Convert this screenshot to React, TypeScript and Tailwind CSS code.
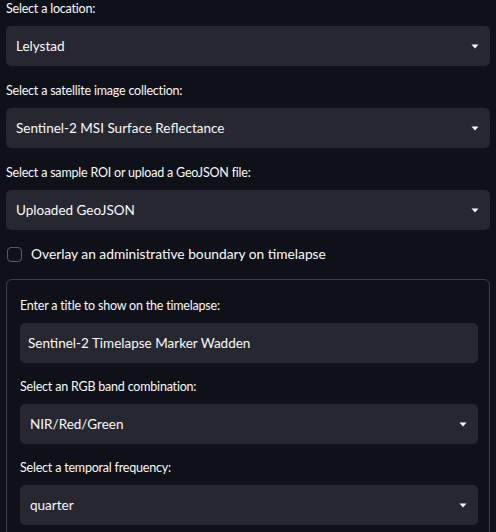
import React from 'react';

const Caret: React.FC = () => (
  <svg width="8" height="5" viewBox="0 0 8 5" className="shrink-0">
    <path d="M0.5 0.5h7L4 4.5z" fill="#fafafa" />
  </svg>
);

interface FieldProps {
  label: string;
  value: string;
}

const FieldLabel: React.FC<{ text: string }> = ({ text }) => (
  <div className="h-[26px] text-[12.5px] leading-[18px] tracking-[-0.2px] text-[#fafafa]">{text}</div>
);

const SelectField: React.FC<FieldProps> = ({ label, value }) => (
  <div className="flex flex-col">
    <FieldLabel text={label} />
    <div className="h-10 rounded-[5px] bg-[#262730] flex items-center justify-between pl-[10px] pr-[11px]">
      <span className="text-[13.5px] text-[#fafafa]">{value}</span>
      <Caret />
    </div>
  </div>
);

const TextField: React.FC<FieldProps> = ({ label, value }) => (
  <div className="flex flex-col">
    <FieldLabel text={label} />
    <div className="h-10 rounded-[5px] bg-[#262730] flex items-center pl-[8px]">
      <span className="text-[13.5px] text-[#fafafa]">{value}</span>
    </div>
  </div>
);

export default function App() {
  return (
    <div
      className="w-[496px] h-[532px] overflow-hidden bg-[#0e1117] px-[6px] flex flex-col"
      style={{ fontFamily: 'Lato, "Noto Sans", sans-serif' }}
    >
      <div className="flex flex-col gap-4">
        <SelectField label="Select a location:" value="Lelystad" />
        <SelectField label="Select a satellite image collection:" value="Sentinel-2 MSI Surface Reflectance" />
        <SelectField label="Select a sample ROI or upload a GeoJSON file:" value="Uploaded GeoJSON" />
      </div>

      <div className="mt-4 flex items-center h-4 pl-px">
        <div className="w-[15px] h-[15px] rounded-[4px] border border-[#5a5c64]" />
        <span className="ml-[9px] text-[13.75px] text-[#fafafa]">Overlay an administrative boundary on timelapse</span>
      </div>

      <div className="mt-[17px] rounded-[6px] border border-[#3d3f46] pt-[17px] pl-[13px] pr-[11px] pb-4 flex flex-col gap-[15px]">
        <TextField label="Enter a title to show on the timelapse:" value="Sentinel-2 Timelapse Marker Wadden" />
        <SelectField label="Select an RGB band combination:" value="NIR/Red/Green" />
        <SelectField label="Select a temporal frequency:" value="quarter" />
      </div>
    </div>
  );
}
